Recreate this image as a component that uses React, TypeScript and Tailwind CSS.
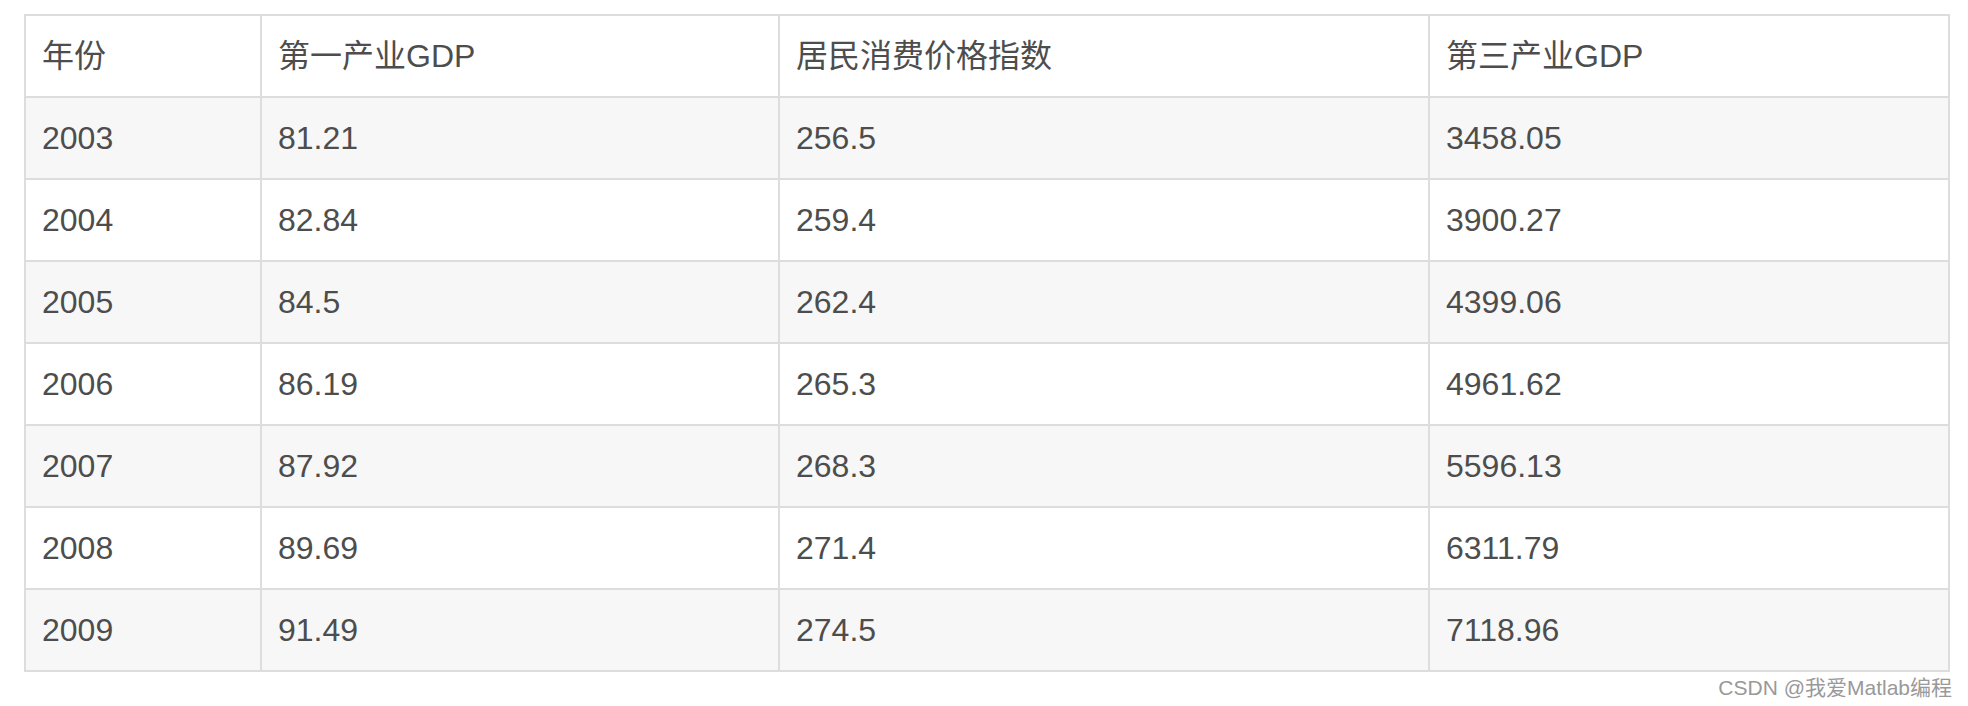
import React from 'react';

const rows: [string, string, string, string][] = [
  ['2003', '81.21', '256.5', '3458.05'],
  ['2004', '82.84', '259.4', '3900.27'],
  ['2005', '84.5', '262.4', '4399.06'],
  ['2006', '86.19', '265.3', '4961.62'],
  ['2007', '87.92', '268.3', '5596.13'],
  ['2008', '89.69', '271.4', '6311.79'],
  ['2009', '91.49', '274.5', '7118.96'],
];

const headers = ['年份', '第一产业GDP', '居民消费价格指数', '第三产业GDP'];

const cell = 'border-2 border-[#dddddd] h-[82px] px-[16px] py-0 text-left align-middle font-normal';

export default function App() {
  return (
    <div
      className="w-[1968px] h-[706px] bg-white pt-[14px] text-[#4d4d4d]"
      style={{ fontFamily: '"Liberation Sans", Arial, "Noto Sans CJK SC", sans-serif' }}
    >
      <table className="ml-[24px] w-[1924px] table-fixed border-collapse text-[32px] leading-none">
        <colgroup>
          <col className="w-[236px]" />
          <col className="w-[518px]" />
          <col className="w-[650px]" />
          <col className="w-[520px]" />
        </colgroup>
        <thead>
          <tr className="bg-white">
            {headers.map((h) => (
              <th key={h} className={cell}>
                {h}
              </th>
            ))}
          </tr>
        </thead>
        <tbody>
          {rows.map((r, i) => (
            <tr key={r[0]} className={i % 2 === 0 ? 'bg-[#f7f7f7]' : 'bg-white'}>
              {r.map((v, j) => (
                <td key={j} className={cell}>
                  {v}
                </td>
              ))}
            </tr>
          ))}
        </tbody>
      </table>
      <div className="mt-[4px] pr-[16px] text-right text-[21px] leading-[24px] text-[#999999]">
        CSDN @我爱Matlab编程
      </div>
    </div>
  );
}
